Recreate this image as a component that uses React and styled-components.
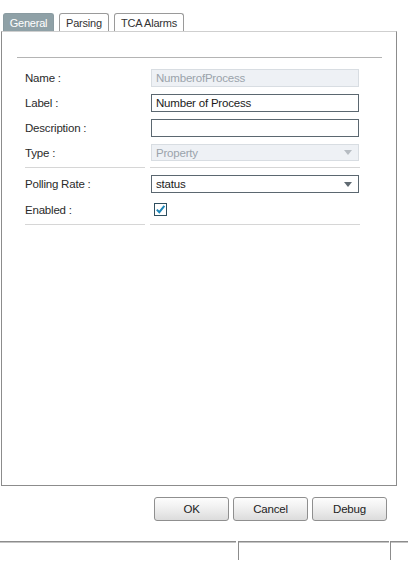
import React from 'react';
import styled, { createGlobalStyle } from 'styled-components';

const GlobalStyle = createGlobalStyle`
  html, body {
    margin: 0;
    padding: 0;
    background: #ffffff;
  }
  body {
    font-family: "Liberation Sans", Arial, sans-serif;
    font-size: 11px;
    color: #222;
  }
`;

const Page = styled.div`
  width: 408px;
  height: 564px;
  display: flex;
  flex-direction: column;
  overflow: hidden;
  & > * {
    flex-shrink: 0;
  }
`;

const TabBar = styled.div`
  display: flex;
  gap: 5px;
  margin: 13px 0 0 3px;
  height: 18px;
`;

const Tab = styled.div`
  width: ${p => p.$w}px;
  height: 17px;
  display: flex;
  align-items: center;
  justify-content: center;
  border: 1px solid ${p => (p.$active ? '#8a9ba1' : '#9a9a9a')};
  border-bottom: none;
  border-radius: 3px 3px 0 0;
  background: ${p => (p.$active ? '#8fa1a7' : '#ffffff')};
  color: ${p => (p.$active ? '#ffffff' : '#333333')};
  font-size: 11px;
  letter-spacing: -0.2px;
`;

const Panel = styled.div`
  margin-left: 1px;
  width: 394px;
  height: 428px;
  border: 1px solid #8c8c8c;
  border-top-color: #cfcfcf;
  padding-top: 25px;
`;

const TopRule = styled.div`
  margin-left: 15px;
  width: 365px;
  height: 1px;
  background: #b4b4b4;
  margin-bottom: 11px;
`;

const Form = styled.div`
  display: grid;
  grid-template-columns: 120px 210px;
  column-gap: 5px;
  margin-left: 23px;
`;

const Label = styled.div`
  display: flex;
  align-items: center;
  height: ${p => p.$h || 18}px;
  margin-top: ${p => p.$mt || 0}px;
  margin-bottom: ${p => p.$mb ?? 7}px;
  font-size: 11.5px;
  letter-spacing: -0.2px;
  color: #2a2a2a;
`;

const Field = styled.div`
  display: flex;
  align-items: center;
  height: ${p => p.$h || 18}px;
  margin-top: ${p => p.$mt || 0}px;
  margin-bottom: ${p => p.$mb ?? 7}px;
  padding: 0 1px;
`;

const Input = styled.div`
  flex: 1;
  height: 100%;
  box-sizing: border-box;
  border: 1px solid ${p => (p.$disabled ? '#d8dde2' : '#5b6770')};
  background: ${p => (p.$disabled ? '#eef1f5' : '#ffffff')};
  color: ${p => (p.$disabled ? '#9aa3ab' : '#1a1a1a')};
  display: flex;
  align-items: center;
  padding: 0 4px;
  font-size: 11.5px;
  letter-spacing: -0.2px;
`;

const Select = styled(Input)`
  justify-content: space-between;
  padding-right: 6px;
`;

const Arrow = styled.span`
  width: 0;
  height: 0;
  border-left: 4px solid transparent;
  border-right: 4px solid transparent;
  border-top: 5px solid ${p => (p.$disabled ? '#b6bcc2' : '#606a72')};
`;

const Rule = styled.div`
  height: 1px;
  background: #d6d6d6;
  margin-bottom: ${p => p.$mb ?? 7}px;
`;

const Check = styled.div`
  width: 13px;
  height: 13px;
  box-sizing: border-box;
  border: 1px solid #2f4f5f;
  background: #fff;
  margin-left: 3px;
  display: flex;
  align-items: center;
  justify-content: center;
`;

const ButtonRow = styled.div`
  display: flex;
  gap: 4px;
  margin: 11px 0 0 154px;
`;

const Button = styled.button`
  width: 75px;
  height: 24px;
  box-sizing: border-box;
  border: 1px solid #8f8f8f;
  border-radius: 3px;
  background: linear-gradient(to bottom, #fdfdfd 0%, #eeeeee 50%, #dcdcdc 100%);
  font-family: "Liberation Sans", Arial, sans-serif;
  font-size: 11.5px;
  letter-spacing: -0.2px;
  color: #222;
  padding: 0;
`;

const StatusBar = styled.div`
  display: flex;
  margin-top: 20px;
  height: 19px;
`;

const StatusCell = styled.div`
  width: ${p => p.$w}px;
  flex: ${p => (p.$grow ? 1 : 'none')};
  margin-left: ${p => p.$gap || 0}px;
  border-top: 1px solid #8c8c8c;
  box-shadow: inset 0 1px 0 #c4c4c4;
  border-left: ${p => (p.$edge ? '1px solid #8c8c8c' : 'none')};
`;

const CheckMark = () => (
  <svg width="11" height="11" viewBox="0 0 11 11">
    <path d="M1.8 5.6 L4.3 8.2 L9.4 1.8" fill="none" stroke="#1c86b8" strokeWidth="2" />
  </svg>
);

export default function App() {
  return (
    <Page>
      <GlobalStyle />
      <TabBar>
        <Tab $active $w={49}>General</Tab>
        <Tab $w={48}>Parsing</Tab>
        <Tab $w={68}>TCA Alarms</Tab>
      </TabBar>
      <Panel>
        <TopRule />
        <Form>
          <Label>Name :</Label>
          <Field><Input $disabled>NumberofProcess</Input></Field>

          <Label>Label :</Label>
          <Field><Input>Number of Process</Input></Field>

          <Label>Description :</Label>
          <Field><Input /></Field>

          <Label $h={17} $mb={6}>Type :</Label>
          <Field $h={17} $mb={6}>
            <Select $disabled>Property<Arrow $disabled /></Select>
          </Field>

          <Rule />
          <Rule />

          <Label>Polling Rate :</Label>
          <Field><Select>status<Arrow /></Select></Field>

          <Label $h={13} $mt={3} $mb={8}>Enabled :</Label>
          <Field $h={13} $mt={3} $mb={8}>
            <Check><CheckMark /></Check>
          </Field>

          <Rule />
          <Rule />
        </Form>
      </Panel>
      <ButtonRow>
        <Button>OK</Button>
        <Button>Cancel</Button>
        <Button>Debug</Button>
      </ButtonRow>
      <StatusBar>
        <StatusCell $w={236} />
        <StatusCell $w={150} $gap={2} $edge />
        <StatusCell $grow $gap={1} $edge />
      </StatusBar>
    </Page>
  );
}
